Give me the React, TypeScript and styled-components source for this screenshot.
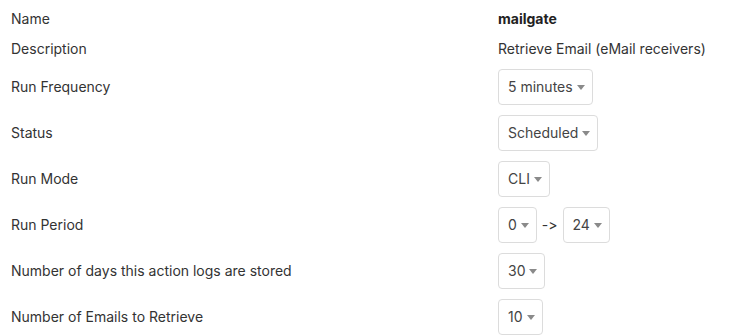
import React from "react";
import styled, { createGlobalStyle } from "styled-components";

const GlobalStyle = createGlobalStyle`
  body {
    margin: 0;
    background: #fff;
    font-family: Inter, "Noto Sans", sans-serif;
    font-size: 14px;
    font-feature-settings: "calt" 0;
    color: #333;
  }
`;

const Page = styled.div`
  padding-top: 4px;
`;

const Table = styled.table`
  border-collapse: collapse;
  width: 100%;
`;

const Label = styled.td`
  padding: 5px 0 5px 11px;
  width: 487px;
  line-height: 20px;
  vertical-align: middle;
`;

const Value = styled.td<{ $bold?: boolean }>`
  padding: 5px 0;
  line-height: 20px;
  font-weight: ${(p) => (p.$bold ? 700 : 400)};
  color: ${(p) => (p.$bold ? "#222" : "#333")};
  vertical-align: middle;
`;

const Inline = styled.div`
  display: flex;
  align-items: center;
  gap: 5px;
`;

const SelectBox = styled.div`
  display: inline-flex;
  align-items: center;
  height: 36px;
  box-sizing: border-box;
  padding: 0 7px 0 9px;
  border: 1px solid #dcdcdc;
  border-radius: 4px;
  background: #fff;
  color: #444;
  cursor: pointer;
`;

const Caret = styled.span`
  display: inline-block;
  margin-left: 4px;
  margin-top: 1px;
  width: 0;
  height: 0;
  border-left: 4px solid transparent;
  border-right: 4px solid transparent;
  border-top: 5px solid #8a8a8a;
`;

const Arrow = styled.span`
  color: #333;
`;

function Select({ value }: { value: string }) {
  return (
    <SelectBox>
      {value}
      <Caret />
    </SelectBox>
  );
}

export default function App() {
  return (
    <Page>
      <GlobalStyle />
      <Table>
        <tbody>
          <tr>
            <Label>Name</Label>
            <Value $bold>mailgate</Value>
          </tr>
          <tr>
            <Label>Description</Label>
            <Value>Retrieve Email (eMail receivers)</Value>
          </tr>
          <tr>
            <Label>Run Frequency</Label>
            <Value>
              <Select value="5 minutes" />
            </Value>
          </tr>
          <tr>
            <Label>Status</Label>
            <Value>
              <Select value="Scheduled" />
            </Value>
          </tr>
          <tr>
            <Label>Run Mode</Label>
            <Value>
              <Select value="CLI" />
            </Value>
          </tr>
          <tr>
            <Label>Run Period</Label>
            <Value>
              <Inline>
                <Select value="0" />
                <Arrow>-&gt;</Arrow>
                <Select value="24" />
              </Inline>
            </Value>
          </tr>
          <tr>
            <Label>Number of days this action logs are stored</Label>
            <Value>
              <Select value="30" />
            </Value>
          </tr>
          <tr>
            <Label>Number of Emails to Retrieve</Label>
            <Value>
              <Select value="10" />
            </Value>
          </tr>
        </tbody>
      </Table>
    </Page>
  );
}
